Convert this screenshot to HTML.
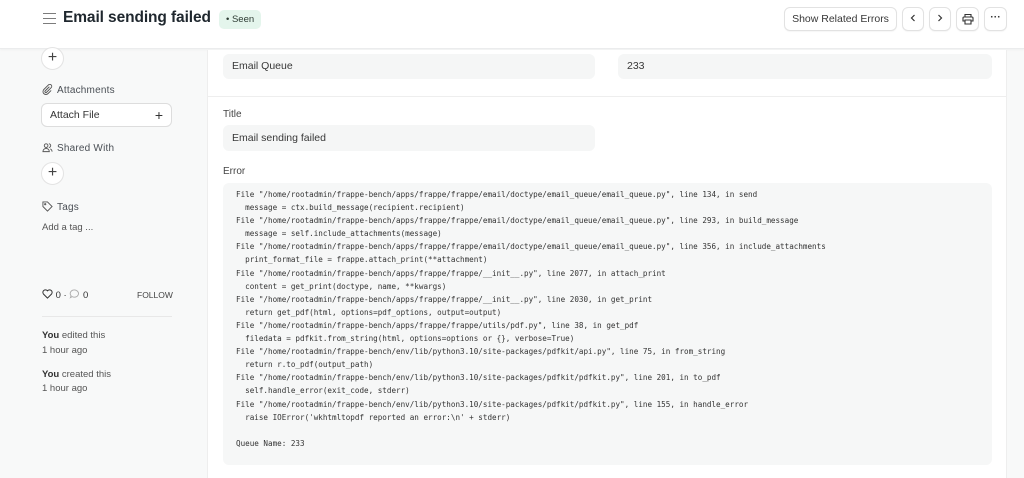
<!DOCTYPE html>
<html><head><meta charset="utf-8"><style>
*{box-sizing:border-box;margin:0;padding:0}
body{width:1024px;height:478px;overflow:hidden;background:#f8f9f9;font-family:"Liberation Sans",sans-serif;color:#1f272e;position:relative}
.hdr{position:absolute;left:0;top:0;width:1024px;height:49px;background:#fff;border-bottom:1px solid #ebeced;box-shadow:0 1px 2px rgba(0,0,0,.04)}
.ham{position:absolute;left:43px;top:13px;width:13px;height:12px}
.ham i{display:block;height:1.3px;background:#7c7c7c;margin-bottom:3.7px}
.title{position:absolute;left:63px;top:9px;font-size:15.5px;font-weight:bold;color:#1f272e;letter-spacing:-.1px}
.seen{position:absolute;left:219px;top:10px;height:19px;padding:0 7px;background:#e4f5ec;border-radius:5px;font-size:9.5px;line-height:19px;color:#2d3b33}
.btn{position:absolute;top:7px;height:24px;border:1px solid #e2e2e2;border-radius:6px;background:#fff;font-size:10.5px;line-height:22px;text-align:center;color:#383838;box-shadow:0 1px 1px rgba(0,0,0,.04)}
.btn svg{margin-top:5px}
.side{position:absolute;left:0;top:50px;width:207px;height:428px}
.circ{position:absolute;left:41px;width:23px;height:23px;border-radius:50%;background:#fff;border:1px solid #e3e3e3;text-align:center;line-height:20px;font-size:16px;color:#444}
.lbl{position:absolute;left:42px;font-size:10px;color:#4a4f55;letter-spacing:.2px}
.lbl svg{vertical-align:-2px;margin-right:4px}
.sm{position:absolute;left:42px;font-size:9.5px;color:#555}
.main{position:absolute;left:207px;top:50px;width:800px;height:428px;background:#fff;border-left:1px solid #eee;border-right:1px solid #eee}
.field{position:absolute;background:#f5f6f6;border-radius:6px;font-size:10.5px;color:#383838;padding-left:9px}
.flbl{position:absolute;left:15px;font-size:10px;color:#444}
pre{position:absolute;left:15px;top:133px;width:769px;height:282px;background:#f6f7f7;border-radius:6px;padding:5px 0 0 13px;font-family:"DejaVu Sans Mono","Liberation Mono",monospace;font-size:7.6px;line-height:13.1px;color:#333}
</style></head><body>
<div class="hdr">
<div class="ham"><i></i><i></i><i></i></div>
<div class="title">Email sending failed</div>
<div class="seen">• Seen</div>
<div class="btn" style="left:784px;width:113px">Show Related Errors</div>
<div class="btn" style="left:902px;width:22px"><svg width="10" height="10" viewBox="0 0 10 10" fill="none" stroke="#333" stroke-width="1.2"><path d="M6.5 2L3.5 5l3 3"/></svg></div>
<div class="btn" style="left:929px;width:22px"><svg width="10" height="10" viewBox="0 0 10 10" fill="none" stroke="#333" stroke-width="1.2"><path d="M3.5 2l3 3-3 3"/></svg></div>
<div class="btn" style="left:956px;width:23px"><svg width="12" height="12" viewBox="0 0 12 12" fill="none" stroke="#333" stroke-width="1.1"><path d="M3 4V1.5h6V4M2 4h8a1 1 0 0 1 1 1v3H9M3 8H1V5a1 1 0 0 1 1-1M3 7h6v4H3z"/></svg></div>
<div class="btn" style="left:984px;width:23px;line-height:18px;font-weight:bold">···</div>
</div>
<div class="side">
<div class="circ" style="top:-3px">+</div>
<div class="lbl" style="top:34px"><svg width="11" height="11" viewBox="0 0 12 12" fill="none" stroke="#555" stroke-width="1"><path d="M8 3L3.5 7.5a1 1 0 0 0 1.5 1.5L10 4a2 2 0 0 0-3-3L2 6a3 3 0 0 0 4.5 4.5L10 7"/></svg>Attachments</div>
<div style="position:absolute;left:41px;top:53px;width:131px;height:24px;background:#fff;border:1px solid #ddd;border-radius:6px;font-size:10.5px;line-height:22px;padding-left:8px;color:#333">Attach File<span style="position:absolute;right:8px;font-size:14px">+</span></div>
<div class="lbl" style="top:92px"><svg width="11" height="11" viewBox="0 0 12 12" fill="none" stroke="#555" stroke-width="1"><circle cx="4.5" cy="4" r="2"/><path d="M1 10.5a3.5 3.5 0 0 1 7 0zM7.5 2a2 2 0 0 1 0 4M9 7.5a3.5 3.5 0 0 1 2 3"/></svg>Shared With</div>
<div class="circ" style="top:112px">+</div>
<div class="lbl" style="top:151px"><svg width="11" height="11" viewBox="0 0 12 12" fill="none" stroke="#555" stroke-width="1"><path d="M1 1h5l5 5-5 5-5-5z"/><circle cx="3.5" cy="3.5" r=".7"/></svg>Tags</div>
<div class="sm" style="top:172px">Add a tag ...</div>
<div class="sm" style="top:239px;color:#333"><svg width="11" height="10" viewBox="0 0 12 11" fill="none" stroke="#333" stroke-width="1.1" style="vertical-align:-1px"><path d="M6 10L1.5 5.5a2.6 2.6 0 0 1 4.5-3.5 2.6 2.6 0 0 1 4.5 3.5z"/></svg> 0 · <svg width="11" height="10" viewBox="0 0 12 11" fill="none" stroke="#aaa" stroke-width="1" style="vertical-align:-1px"><path d="M6 1a4.5 4 0 1 1-2.5 7.4L1.5 9.5l.8-2A4.5 4 0 0 1 6 1z"/></svg> 0</div>
<div class="sm" style="top:240px;left:137px;font-size:8.5px;color:#444">FOLLOW</div>
<div style="position:absolute;left:42px;top:266px;width:130px;height:1px;background:#e8e8e8"></div>
<div class="sm" style="top:280px"><b style="color:#333">You</b> edited this</div>
<div class="sm" style="top:295px">1 hour ago</div>
<div class="sm" style="top:319px"><b style="color:#333">You</b> created this</div>
<div class="sm" style="top:333px">1 hour ago</div>
</div>
<div class="main">
<div class="field" style="left:15px;top:4px;width:372px;height:25px;line-height:25px">Email Queue</div>
<div class="field" style="left:410px;top:4px;width:374px;height:25px;line-height:25px">233</div>
<div style="position:absolute;left:0;top:46px;width:799px;height:1px;background:#eee"></div>
<div class="flbl" style="top:59px">Title</div>
<div class="field" style="left:15px;top:75px;width:372px;height:26px;line-height:26px">Email sending failed</div>
<div class="flbl" style="top:116px">Error</div>
<pre>File "/home/rootadmin/frappe-bench/apps/frappe/frappe/email/doctype/email_queue/email_queue.py", line 134, in send
  message = ctx.build_message(recipient.recipient)
File "/home/rootadmin/frappe-bench/apps/frappe/frappe/email/doctype/email_queue/email_queue.py", line 293, in build_message
  message = self.include_attachments(message)
File "/home/rootadmin/frappe-bench/apps/frappe/frappe/email/doctype/email_queue/email_queue.py", line 356, in include_attachments
  print_format_file = frappe.attach_print(**attachment)
File "/home/rootadmin/frappe-bench/apps/frappe/frappe/__init__.py", line 2077, in attach_print
  content = get_print(doctype, name, **kwargs)
File "/home/rootadmin/frappe-bench/apps/frappe/frappe/__init__.py", line 2030, in get_print
  return get_pdf(html, options=pdf_options, output=output)
File "/home/rootadmin/frappe-bench/apps/frappe/frappe/utils/pdf.py", line 38, in get_pdf
  filedata = pdfkit.from_string(html, options=options or {}, verbose=True)
File "/home/rootadmin/frappe-bench/env/lib/python3.10/site-packages/pdfkit/api.py", line 75, in from_string
  return r.to_pdf(output_path)
File "/home/rootadmin/frappe-bench/env/lib/python3.10/site-packages/pdfkit/pdfkit.py", line 201, in to_pdf
  self.handle_error(exit_code, stderr)
File "/home/rootadmin/frappe-bench/env/lib/python3.10/site-packages/pdfkit/pdfkit.py", line 155, in handle_error
  raise IOError('wkhtmltopdf reported an error:\n' + stderr)

Queue Name: 233</pre>
</div>
</body></html>
